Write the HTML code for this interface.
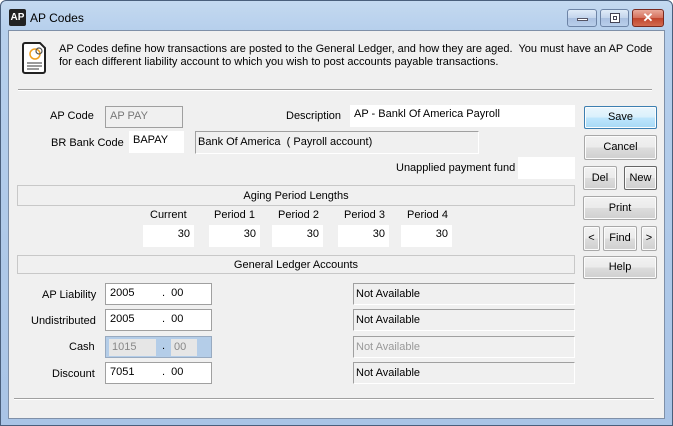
<!DOCTYPE html>
<html><head><style>
*{box-sizing:border-box;margin:0;padding:0}
body{width:673px;height:426px;overflow:hidden;font-family:"Liberation Sans",sans-serif;font-size:11px;color:#000;background:#fff}
.win{position:absolute;left:0;top:0;width:673px;height:426px;background:linear-gradient(#c4d9f0,#b6cfec 30px,#a9c4e6);border:1px solid #4a5f7c;border-radius:6px 6px 0 0}
.client{position:absolute;left:8px;top:30px;width:657px;height:389px;background:#f0f0f0;border:1px solid #7f90a8}
.a{position:absolute}
.in{position:absolute;background:#fff;height:22px;padding:3px 4px;font-size:11px}
.lbl{position:absolute;font-size:11px;white-space:nowrap}
.box{position:absolute;background:#f0f0f0;border-top:1px solid #a0a0a0;border-left:1px solid #a0a0a0;border-right:1px solid #fff;border-bottom:1px solid #fff;padding:4px 2px;font-size:11px}
.hdr{position:absolute;border:1px solid #c8c8c8;background:#f0f0f0;text-align:center;font-size:11px;padding-top:4px}
.btn{position:absolute;border:1px solid #a8a8a8;background:linear-gradient(#f2f2f2 0,#ebebeb 50%,#dddddd 51%,#cfcfcf);text-align:center;font-size:11px;border-radius:2px;box-shadow:inset 0 0 0 1px #fcfcfc}
.tb{position:absolute;top:8px;height:18px;border:1px solid #6d84a6;border-radius:3px;background:linear-gradient(#e0ebf8,#c2d4ec 50%,#a9c0e0 51%,#b9cfeb)}
</style></head><body>
<div class="win">
<div class="a" style="left:8px;top:8px;width:17px;height:17px;background:#222;color:#fff;font-weight:bold;font-size:10px;line-height:17px;text-align:center;border-radius:2px">AP</div>
<div class="a" style="left:29px;top:10px;font-size:12px">AP Codes</div>
<div class="tb" style="left:566px;width:30px"><div class="a" style="left:9px;top:8px;width:11px;height:3px;background:#fff;border:1px solid #556"></div></div>
<div class="tb" style="left:599px;width:29px"><div class="a" style="left:9px;top:3px;width:10px;height:10px;border:1px solid #445;background:#fff"><div class="a" style="left:2px;top:2px;width:4px;height:4px;border:1px solid #445"></div></div></div>
<div class="tb" style="left:631px;width:32px;background:linear-gradient(#e9a89a,#d5705c 50%,#c1442c 51%,#d26a50);border-color:#7a2a20;color:#fff;font-weight:bold;text-align:center;font-size:13px;line-height:15px">✕</div>
</div>
<div class="client"></div>
<!-- info icon -->
<svg class="a" style="left:22px;top:41px" width="26" height="34" viewBox="0 0 26 34"><path d="M3 2h15l5 5v23a2 2 0 0 1-2 2H3a2 2 0 0 1-2-2V4a2 2 0 0 1 2-2z" fill="#fff" stroke="#222" stroke-width="2"/><circle cx="13" cy="13" r="5" fill="none" stroke="#f0a020" stroke-width="1.5"/><circle cx="17" cy="10" r="3" fill="none" stroke="#555" stroke-width="1.2"/><path d="M5 22h15M5 25h15M5 28h12" stroke="#333"/></svg>
<div class="lbl" style="left:59px;top:43px;line-height:13px;font-size:11px">AP Codes define how transactions are posted to the General Ledger, and how they are aged.&nbsp; You must have an AP Code<br>for each different liability account to which you wish to post accounts payable transactions.</div>
<div class="a" style="left:18px;top:89px;width:634px;height:2px;border-top:1px solid #a0a0a0;border-bottom:1px solid #fff"></div>

<div class="lbl" style="left:50px;top:110px">AP Code</div>
<div class="in" style="left:105px;top:106px;width:78px;background:#f0f0f0;border:1px solid #a0a0a0;color:#777">AP PAY</div>
<div class="lbl" style="left:286px;top:110px">Description</div>
<div class="in" style="left:350px;top:105px;width:225px">AP - Bankl Of America Payroll</div>
<div class="lbl" style="left:51px;top:137px">BR Bank Code</div>
<div class="in" style="left:129px;top:131px;width:55px">BAPAY</div>
<div class="box" style="left:195px;top:131px;width:284px;height:23px">Bank Of America&nbsp; ( Payroll account)</div>
<div class="lbl" style="left:396px;top:162px">Unapplied payment fund</div>
<div class="in" style="left:518px;top:157px;width:57px"></div>

<div class="hdr" style="left:17px;top:185px;width:558px;height:21px">Aging Period Lengths</div>
<div class="lbl" style="left:150px;top:209px">Current</div>
<div class="lbl" style="left:214px;top:209px">Period 1</div>
<div class="lbl" style="left:278px;top:209px">Period 2</div>
<div class="lbl" style="left:344px;top:209px">Period 3</div>
<div class="lbl" style="left:407px;top:209px">Period 4</div>
<div class="in" style="left:143px;top:225px;width:51px;text-align:right">30</div>
<div class="in" style="left:209px;top:225px;width:51px;text-align:right">30</div>
<div class="in" style="left:272px;top:225px;width:51px;text-align:right">30</div>
<div class="in" style="left:338px;top:225px;width:51px;text-align:right">30</div>
<div class="in" style="left:401px;top:225px;width:51px;text-align:right">30</div>

<div class="hdr" style="left:17px;top:255px;width:558px;height:19px;padding-top:3px">General Ledger Accounts</div>
<div class="lbl" style="left:42px;top:289px">AP Liability</div>
<div class="lbl" style="left:31px;top:315px">Undistributed</div>
<div class="lbl" style="left:69px;top:341px">Cash</div>
<div class="lbl" style="left:52px;top:368px">Discount</div>
<div class="in" style="left:105px;top:283px;width:107px;border:1px solid #a0a0a0">2005&nbsp;&nbsp;&nbsp;&nbsp;&nbsp;&nbsp;&nbsp;&nbsp;&nbsp;.&nbsp; 00</div>
<div class="in" style="left:105px;top:309px;width:107px;border:1px solid #a0a0a0">2005&nbsp;&nbsp;&nbsp;&nbsp;&nbsp;&nbsp;&nbsp;&nbsp;&nbsp;.&nbsp; 00</div>
<div class="a" style="left:105px;top:336px;width:107px;height:22px;background:#b4cde8;border:1px solid #98aac0">
 <div class="a" style="left:3px;top:2px;width:47px;height:17px;background:#e6e6e6;color:#888;padding:2px 3px">1015</div>
 <div class="a" style="left:56px;top:3px;font-size:11px">.</div>
 <div class="a" style="left:65px;top:2px;width:26px;height:17px;background:#e6e6e6;color:#888;padding:2px 3px">00</div>
</div>
<div class="in" style="left:105px;top:362px;width:107px;border:1px solid #a0a0a0">7051&nbsp;&nbsp;&nbsp;&nbsp;&nbsp;&nbsp;&nbsp;&nbsp;&nbsp;.&nbsp; 00</div>
<div class="box" style="left:353px;top:283px;width:222px;height:22px">Not Available</div>
<div class="box" style="left:353px;top:309px;width:222px;height:22px">Not Available</div>
<div class="box" style="left:353px;top:336px;width:222px;height:22px;color:#999">Not Available</div>
<div class="box" style="left:353px;top:362px;width:222px;height:22px">Not Available</div>
<div class="a" style="left:14px;top:398px;width:640px;height:2px;border-top:1px solid #a0a0a0;border-bottom:1px solid #fff"></div>

<div class="btn" style="left:584px;top:106px;width:73px;height:23px;line-height:21px;border-color:#3c7fb1;background:linear-gradient(#eaf6fd,#d9f0fc 50%,#bee6fd 51%,#a7d9f5)">Save</div>
<div class="btn" style="left:584px;top:135px;width:73px;height:25px;line-height:23px">Cancel</div>
<div class="btn" style="left:583px;top:166px;width:34px;height:24px;line-height:22px">Del</div>
<div class="btn" style="left:624px;top:166px;width:33px;height:24px;line-height:22px;border-color:#666">New</div>
<div class="btn" style="left:583px;top:196px;width:74px;height:24px;line-height:22px">Print</div>
<div class="btn" style="left:583px;top:226px;width:17px;height:25px;line-height:23px">&lt;</div>
<div class="btn" style="left:603px;top:226px;width:34px;height:25px;line-height:23px">Find</div>
<div class="btn" style="left:641px;top:226px;width:16px;height:25px;line-height:23px">&gt;</div>
<div class="btn" style="left:583px;top:256px;width:74px;height:23px;line-height:21px">Help</div>
</body></html>
